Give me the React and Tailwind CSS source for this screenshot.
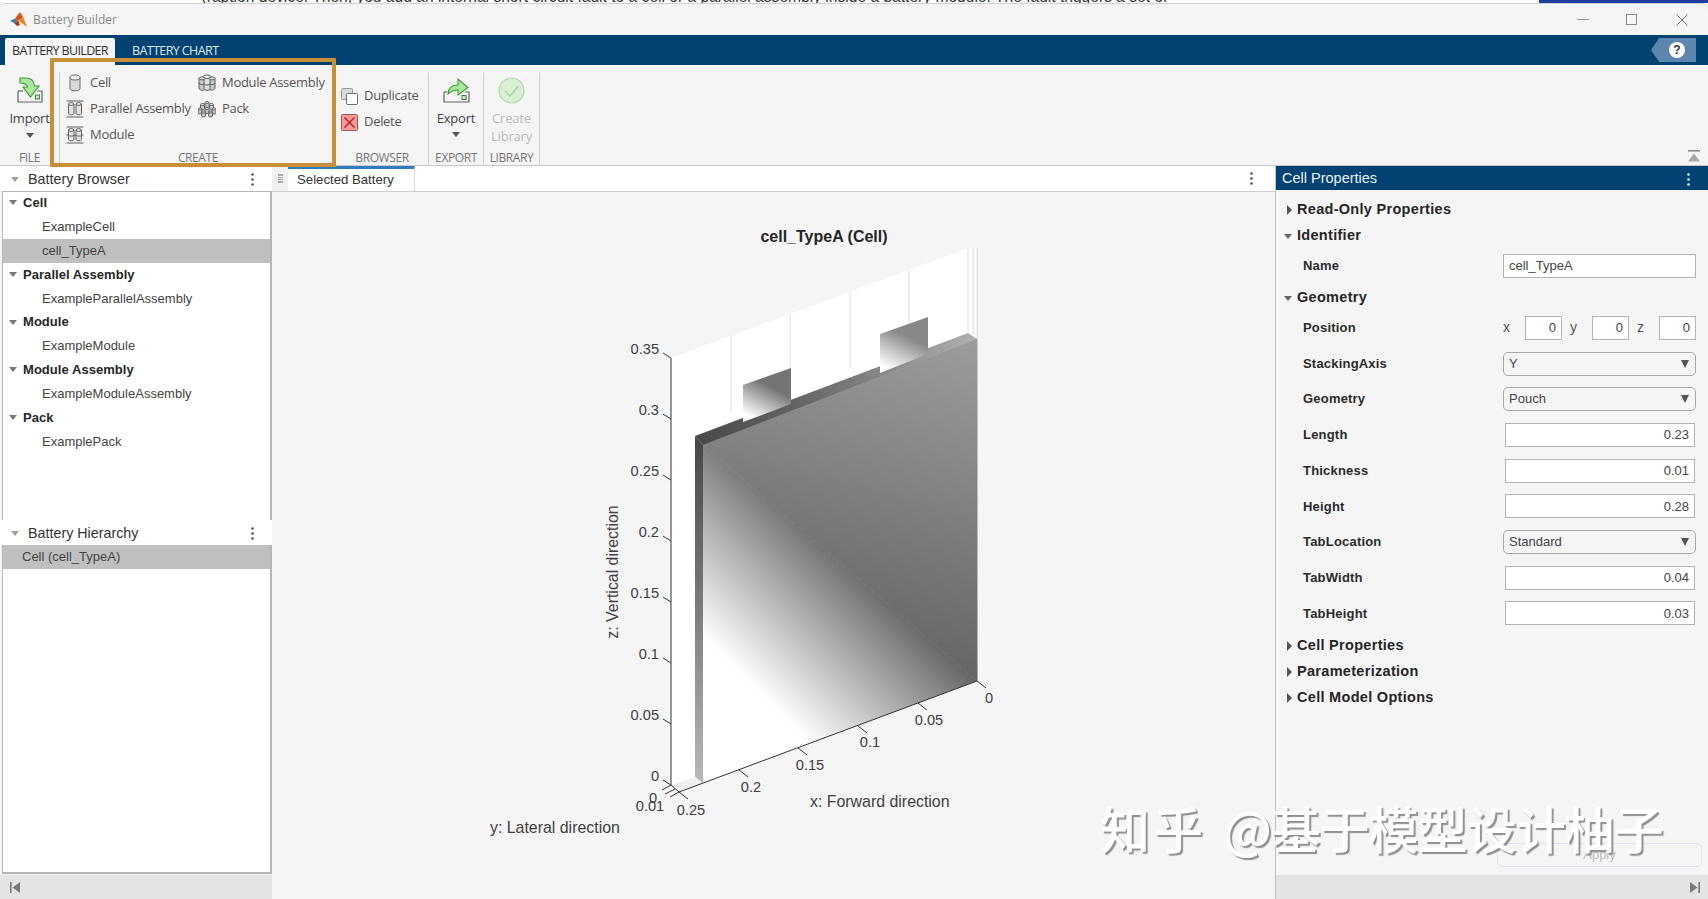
import React from 'react';

const treeGroups = [
  { name: 'Cell', items: ['ExampleCell', 'cell_TypeA'] },
  { name: 'Parallel Assembly', items: ['ExampleParallelAssembly'] },
  { name: 'Module', items: ['ExampleModule'] },
  { name: 'Module Assembly', items: ['ExampleModuleAssembly'] },
  { name: 'Pack', items: ['ExamplePack'] },
];

const zLabels = [['0.35', 349], ['0.3', 410], ['0.25', 471], ['0.2', 532], ['0.15', 593], ['0.1', 654], ['0.05', 715], ['0', 776]];
const xTicks = [
  ['0', 977, 681, 989, 698],
  ['0.05', 918, 703, 929, 720],
  ['0.1', 858, 726, 870, 742],
  ['0.15', 798, 748, 810, 765],
  ['0.2', 739, 770, 751, 787],
  ['0.25', 679, 792, 691, 810],
];
const wallLines = [[731, 335, 412], [790, 314, 391], [850, 292, 368], [909, 270, 346], [968, 248, 333], [973, 248, 335]];

function Logo() {
  return (
    <svg width="18" height="16" viewBox="0 0 18 16">
      <polygon points="0,9 5,6.5 8,8.5 4,11" fill="#3f7fb5" />
      <polygon points="5,6.5 10,0 13,6 8,8.5" fill="#d9531e" />
      <polygon points="10,0 12,2 17,15 13,12 8,8.5 13,6" fill="#e8861f" />
      <polygon points="4,11 8,8.5 10,13 7,14" fill="#9c3d17" />
    </svg>
  );
}

function CellIcon() {
  return (
    <svg width="14" height="18" viewBox="0 0 14 18" fill="none">
      <path d="M2 3.5v11c0 3 10 3 10 0v-11" fill="#d9d9d9" stroke="#6b6b6b" />
      <ellipse cx="7" cy="3.5" rx="5" ry="2.5" fill="#eeeeee" stroke="#6b6b6b" />
    </svg>
  );
}

function ParallelIcon({ stacked }) {
  return (
    <svg width="18" height="18" viewBox="0 0 18 18" fill="none" stroke="#5f5f5f" strokeWidth="1">
      <path d="M0.5 1h17M0.5 17h17" />
      <path d="M2.5 4v9.5c0 1.8 5.5 1.8 5.5 0V4M10 4v9.5c0 1.8 5.5 1.8 5.5 0V4" fill="#e2e2e2" />
      <ellipse cx="5.2" cy="4" rx="2.7" ry="1.4" fill="#f1f1f1" />
      <ellipse cx="12.7" cy="4" rx="2.7" ry="1.4" fill="#f1f1f1" />
      {stacked && <path d="M2.5 9c0 1.5 5.5 1.5 5.5 0M10 9c0 1.5 5.5 1.5 5.5 0M0.5 9h2M8 9h2M15.5 9h2" />}
    </svg>
  );
}

function ModuleAssemblyIcon() {
  return (
    <svg width="18" height="18" viewBox="0 0 18 18" fill="none" stroke="#5f5f5f" strokeWidth="1">
      <path d="M1 4v10c0 3 6 3 6 1V4" fill="#c9c9c9" />
      <path d="M11 3v12c0 2 6 1.5 6-1V4" fill="#c9c9c9" />
      <path d="M6 2.5v12c0 2.5 6 2.5 6 0v-12" fill="#e0e0e0" />
      <ellipse cx="9" cy="2.8" rx="4" ry="1.8" fill="#eeeeee" />
      <ellipse cx="4" cy="4.4" rx="3" ry="1.5" fill="#dddddd" />
      <ellipse cx="14" cy="4.4" rx="3" ry="1.5" fill="#dddddd" />
      <path d="M1 9c0 1.5 4 2 5 1.5M12 10.5c1.5.3 5 0 5-1.5M6 9.5c0 2 6 2 6 0" />
    </svg>
  );
}

function PackIcon() {
  const cyl = [[9, 1.5], [4.5, 3.5], [13.5, 3.5], [2, 8], [9, 7.5], [16, 8], [5.5, 11], [12.5, 11]];
  return (
    <svg width="18" height="18" viewBox="0 0 18 18" fill="none" stroke="#5a5a5a" strokeWidth="0.9">
      {cyl.map(([x, y]) => (
        <g key={`${x}-${y}`}>
          <path d={`M${x - 2} ${y + 1}v4c0 1.4 4 1.4 4 0v-4`} fill="#c4c4c4" />
          <ellipse cx={x} cy={y + 1} rx="2" ry="1" fill="#e6e6e6" />
        </g>
      ))}
    </svg>
  );
}

function DuplicateIcon() {
  return (
    <svg width="17" height="17" viewBox="0 0 17 17">
      <rect x="0.5" y="0.5" width="11" height="11" rx="1" fill="#d9d9d9" stroke="#9a9a9a" />
      <rect x="5.5" y="5.5" width="11" height="11" rx="1" fill="#ffffff" stroke="#6e6e6e" />
    </svg>
  );
}

function DeleteIcon() {
  return (
    <svg width="17" height="17" viewBox="0 0 17 17" fill="none">
      <rect x="0.5" y="0.5" width="16" height="16" rx="1" fill="#f59a9a" stroke="#9a5a5a" />
      <path d="M3.5 3.5l10 10M13.5 3.5l-10 10" stroke="#b51c1c" strokeWidth="1.3" />
    </svg>
  );
}

function ImportIcon() {
  return (
    <svg width="26" height="27" viewBox="0 0 26 27" fill="none">
      <path d="M1 14v11h24V14h-5" stroke="#666" strokeWidth="1.2" fill="#f5f5f5" />
      <path d="M1 14h5" stroke="#666" strokeWidth="1.2" />
      <rect x="18.5" y="18" width="4" height="4" fill="#c6ecc0" stroke="#3f7f3f" />
      <path d="M3 1h6c5 0 8 3 8.5 8H22l-8.5 11L6 10h4.5C10 7.5 8 6 3 6z" fill="#a8e89a" stroke="#3c9a3c" strokeWidth="1.1" />
    </svg>
  );
}

function ExportIcon() {
  return (
    <svg width="27" height="25" viewBox="0 0 27 25" fill="none">
      <path d="M1 14v10h25V14h-4" stroke="#666" strokeWidth="1.2" fill="#f5f5f5" />
      <path d="M1 14h3" stroke="#666" strokeWidth="1.2" />
      <rect x="19" y="17.5" width="4" height="4" fill="#c6ecc0" stroke="#3f7f3f" />
      <path d="M5 16c0-6 4-9 10-9V1l10 8.5L15 17v-5c-5 0-7 1-10 4z" fill="#a8e89a" stroke="#3c9a3c" strokeWidth="1.1" />
    </svg>
  );
}

function CheckCircleIcon() {
  return (
    <svg width="27" height="27" viewBox="0 0 27 27" fill="none">
      <circle cx="13.5" cy="13.5" r="12.5" fill="#d8efd4" stroke="#b0dcaa" strokeWidth="1.2" />
      <path d="M7 14l5 5 8.5-10" stroke="#9fcf98" strokeWidth="1.2" />
    </svg>
  );
}

function Dots({ className = 'fill-[#555]' }) {
  return (
    <svg width="3" height="13" viewBox="0 0 3 13" className={className}>
      <circle cx="1.5" cy="1.5" r="1.3" />
      <circle cx="1.5" cy="6.5" r="1.3" />
      <circle cx="1.5" cy="11.5" r="1.3" />
    </svg>
  );
}

function TriDown({ className = 'border-t-[#8a8a8a]' }) {
  return <span className={`block w-0 h-0 border-x-[4.5px] border-x-transparent border-t-[5px] ${className}`} />;
}

function TriRight() {
  return <span className="block w-0 h-0 border-y-[5px] border-y-transparent border-l-[5px] border-l-[#555]" />;
}

function Section({ className, label, children }) {
  return (
    <div className={`flex flex-col mt-2 border-r border-[#cfcfcf] ${className}`}>
      <div className="flex-1 min-h-0">{children}</div>
      <div className="h-3.5 leading-[14px] text-center text-[12px] text-[#777] tracking-[-0.4px]">{label}</div>
    </div>
  );
}

function RibbonButton({ icon, children }) {
  return (
    <div className="flex flex-col items-center pt-1">
      <div className="h-[26px] flex items-center">{icon}</div>
      <div className="mt-[6px] leading-[18px] text-center text-[13px] text-[#444] tracking-[-0.2px]">{children}</div>
    </div>
  );
}

function SmallButton({ icon, iconClass = 'w-[18px]', label }) {
  return (
    <div className="flex items-center h-[26px]">
      <span className={`flex justify-center ${iconClass}`}>{icon}</span>
      <span className="ml-[6px] text-[13px] text-[#555] tracking-[-0.3px]">{label}</span>
    </div>
  );
}

function PanelHeader({ title }) {
  return (
    <div className="h-[25px] pt-0.5 bg-white flex items-center">
      <span className="ml-[11px]"><TriDown className="border-t-[#a0a0a0]" /></span>
      <span className="ml-[9px] text-[14.3px] text-[#333]">{title}</span>
      <span className="ml-auto mr-[18px] flex"><Dots /></span>
    </div>
  );
}

function SectionTitle({ open, children }) {
  return (
    <div className="h-[26px] pt-0.5 flex items-center">
      <span className="w-[21px] flex justify-end pr-[5px]">{open ? <TriDown className="border-t-[#666]" /> : <TriRight />}</span>
      <span className="text-[14.5px] font-bold text-[#262626] tracking-[0.3px]">{children}</span>
    </div>
  );
}

function PropRow({ label, children, tall }) {
  return (
    <div className={`flex items-center pl-[27px] pr-3 ${tall ? 'h-9' : 'h-[35.7px]'}`}>
      <span className="text-[13px] font-bold text-[#2b2b2b] tracking-[0.2px]">{label}</span>
      <div className="ml-auto flex items-center">{children}</div>
    </div>
  );
}

function NumberField({ value }) {
  return (
    <div className="w-[190px] h-6 mr-px bg-white border border-[#b4b4b4] flex items-center justify-end pr-[5px] text-[13px] text-[#444]">{value}</div>
  );
}

function SmallField({ axis, value }) {
  return (
    <>
      <span className="w-[30px] pr-[7px] text-center text-[14px] text-[#555]">{axis}</span>
      <div className="w-[37px] h-6 bg-white border border-[#b4b4b4] flex items-center justify-end pr-[5px] text-[13px] text-[#444]">{value}</div>
    </>
  );
}

function DropDown({ value }) {
  return (
    <div className="w-[193px] h-6 rounded-[5px] bg-[#f5f5f5] border border-[#a8a8a8] flex items-center px-[5px] text-[13px] text-[#444]">
      {value}
      <span className="ml-auto mr-[1px]"><span className="block w-0 h-0 border-x-[4.5px] border-x-transparent border-t-[8px] border-t-[#555]" /></span>
    </div>
  );
}

function BatteryChart() {
  return (
    <svg viewBox="272 192 1003 707" className="w-full h-full block" fontFamily="'Liberation Sans', Arial, sans-serif">
      <defs>
        {/* the face is two shaded triangles split along a diagonal */}
        <linearGradient id="faceLow" gradientUnits="userSpaceOnUse" x1="703" y1="637" x2="818" y2="522">
          <stop offset="0" stopColor="#ffffff" />
          <stop offset="1" stopColor="#666666" />
        </linearGradient>
        <linearGradient id="faceHigh" gradientUnits="userSpaceOnUse" x1="977" y1="681" x2="1059" y2="358">
          <stop offset="0" stopColor="#666666" />
          <stop offset="1" stopColor="#9c9c9c" />
        </linearGradient>
        <linearGradient id="side" x1="0" y1="0" x2="0" y2="1">
          <stop offset="0" stopColor="#464646" />
          <stop offset="0.5" stopColor="#7c7c7c" />
          <stop offset="1" stopColor="#b8b8b8" />
        </linearGradient>
        <linearGradient id="topEdge" gradientUnits="userSpaceOnUse" x1="695" y1="440" x2="977" y2="336">
          <stop offset="0" stopColor="#484848" />
          <stop offset="0.4" stopColor="#686868" />
          <stop offset="1" stopColor="#b0b0b0" />
        </linearGradient>
        <linearGradient id="tabA" gradientUnits="userSpaceOnUse" x1="745" y1="414" x2="762" y2="382">
          <stop offset="0" stopColor="#ffffff" />
          <stop offset="1" stopColor="#747474" />
        </linearGradient>
        <linearGradient id="tabB" gradientUnits="userSpaceOnUse" x1="882" y1="366" x2="899" y2="332">
          <stop offset="0" stopColor="#ffffff" />
          <stop offset="1" stopColor="#888888" />
        </linearGradient>
      </defs>

      {/* back wall */}
      <polygon points="671,358 968,248 977,248 977,681 671,788" fill="#ffffff" />
      {wallLines.map(([x, y1, y2]) => (
        <line key={x} x1={x} y1={y1} x2={x} y2={y2} stroke="#dedede" />
      ))}
      <line x1="977" y1="248" x2="977" y2="339" stroke="#d8d8d8" />

      {/* cell body, upper triangle overlaps the lower one so no seam shows */}
      <polygon points="703,445 977,681 703,783" fill="url(#faceLow)" />
      <polygon points="703,445 977,339 977,681" fill="url(#faceHigh)" stroke="url(#faceHigh)" strokeWidth="1" />
      <polygon points="695,436 968,333 977,339 703,445" fill="url(#topEdge)" />
      <polygon points="695,436 703,445 703,783 695,777" fill="url(#side)" />
      <polygon points="671,785 695,777 703,783 679,792" fill="#f0f0f0" />

      {/* tabs, their gradient runs over the edge below them */}
      <polygon points="743,385 791,368 791,404 743,422" fill="url(#tabA)" />
      <polygon points="880,334 928,317 928,354 880,373" fill="url(#tabB)" />

      {/* axes */}
      <g stroke="#333" strokeWidth="1" fill="none">
        <line x1="671" y1="358" x2="671" y2="785" />
        <line x1="671" y1="785" x2="679" y2="792" />
        <line x1="679" y1="792" x2="977" y2="681" />
        {zLabels.map(([l, y]) => (
          <line key={l} x1="663" y1={y + 4} x2="671" y2={y + 9} />
        ))}
        {xTicks.map(([l, x, y]) => (
          <line key={l} x1={x} y1={y} x2={x + 9} y2={y + 7} />
        ))}
        <line x1="662" y1="790" x2="671" y2="785" />
        <line x1="665" y1="794" x2="675" y2="789" />
        <line x1="670" y1="797" x2="679" y2="792" />
      </g>

      <g fill="#404040" fontSize="14.6">
        {zLabels.map(([l, y]) => (
          <text key={l} x="659" y={y + 5} textAnchor="end">{l}</text>
        ))}
        {xTicks.map(([l, , , tx, ty]) => (
          <text key={l} x={tx} y={ty + 5} textAnchor="middle">{l}</text>
        ))}
        <text x="653" y="803" textAnchor="middle">0</text>
        <text x="650" y="811" textAnchor="middle">0.01</text>
        <text x="810" y="807" fontSize="15.9">x: Forward direction</text>
        <text x="490" y="833" fontSize="15.9">y: Lateral direction</text>
        <text x="618" y="572" fontSize="15.9" textAnchor="middle" transform="rotate(-90 618 572)">z: Vertical direction</text>
      </g>
      <text x="824" y="242" fontSize="16" fontWeight="700" fill="#262626" textAnchor="middle">cell_TypeA (Cell)</text>
    </svg>
  );
}

export default function App() {
  return (
    <div className="relative w-[1708px] h-[899px] overflow-hidden bg-white flex flex-col font-['Liberation_Sans',Arial,sans-serif]">
      {/* what sits behind the window */}
      <div className="h-[3px] flex overflow-hidden bg-white">
        <div className="flex-1 pl-[196px] overflow-hidden whitespace-nowrap text-[15.6px] leading-[18px] text-[#333] -mt-[12px]">
          ▪(raption device. Then, you add an internal short circuit fault to a cell or a parallel assembly inside a battery module. The fault triggers a set of
        </div>
        <div className="w-[169px] bg-[#1c3f9e]" />
      </div>

      {/* title bar */}
      <div className="h-8 bg-[#f5f5f5] rounded-t-[6px] flex items-center border-t border-[#cfcfcf] font-['Open_Sans',sans-serif]">
        <span className="ml-[10px] flex"><Logo /></span>
        <span className="ml-[5px] text-[12px] text-[#888]">Battery Builder</span>
        <div className="ml-auto flex items-center">
          <span className="block w-3 h-px bg-[#9a9a9a]" />
          <span className="ml-[37px] block w-[11px] h-[11px] border border-[#8a8a8a]" />
          <svg className="ml-[39px] mr-5" width="12" height="12" viewBox="0 0 12 12" stroke="#777" fill="none">
            <path d="M0.5 0.5l11 11M11.5 0.5l-11 11" />
          </svg>
        </div>
      </div>

      {/* tab strip */}
      <div className="h-[30px] bg-[#004272] flex items-end pl-[5px] font-['Open_Sans',sans-serif]">
        <div className="w-[110px] h-[27px] bg-[#f5f5f5] rounded-t-[2px] flex items-center justify-center text-[12.5px] tracking-[-0.65px] text-[#333]">BATTERY BUILDER</div>
        <div className="ml-[17px] h-[27px] flex items-center text-[12.5px] tracking-[-0.6px] text-[#dfe8f0]">BATTERY CHART</div>
        <div className="ml-auto mr-3 mb-[3px] h-6 w-[45px] bg-[#5b87ae] [clip-path:polygon(18%_0,100%_0,100%_100%,18%_100%,0_50%)] flex items-center justify-end pr-[11px]">
          <span className="w-4 h-4 rounded-full bg-white text-[#333] text-[12px] font-bold flex items-center justify-center font-['Liberation_Sans']">?</span>
        </div>
      </div>

      {/* ribbon */}
      <div className="h-[101px] bg-[#f5f5f5] border-b border-[#c8c8c8] flex font-['Open_Sans',sans-serif]">
        <Section className="w-[60px]" label="FILE">
          <RibbonButton icon={<ImportIcon />}>
            Import
            <span className="flex justify-center mt-[6px]"><TriDown className="border-t-[#555]" /></span>
          </RibbonButton>
        </Section>

        <Section className="w-[276px] border-r-0" label="CREATE">
          <div className="-mt-[3px] pl-[6px] grid grid-cols-[132px_1fr]">
            <SmallButton icon={<CellIcon />} label="Cell" />
            <SmallButton icon={<ModuleAssemblyIcon />} label="Module Assembly" />
            <SmallButton icon={<ParallelIcon />} label="Parallel Assembly" />
            <SmallButton icon={<PackIcon />} label="Pack" />
            <SmallButton icon={<ParallelIcon stacked />} label="Module" />
          </div>
        </Section>

        <Section className="w-[93px]" label="BROWSER">
          <div className="pt-[10px] pl-[5px]">
            <SmallButton icon={<DuplicateIcon />} iconClass="w-[17px]" label="Duplicate" />
            <SmallButton icon={<DeleteIcon />} iconClass="w-[17px]" label="Delete" />
          </div>
        </Section>

        <Section className="w-[55px]" label="EXPORT">
          <RibbonButton icon={<ExportIcon />}>
            Export
            <span className="flex justify-center mt-[5px]"><TriDown className="border-t-[#555]" /></span>
          </RibbonButton>
        </Section>

        <Section className="w-[56px]" label="LIBRARY">
          <RibbonButton icon={<CheckCircleIcon />}>
            <span className="text-[#bcbcbc]">Create<br />Library</span>
          </RibbonButton>
        </Section>

        <div className="flex-1 flex justify-end items-end pr-[8px] pb-[3px]">
          <svg width="12" height="12" viewBox="0 0 12 12">
            <rect x="0" y="0" width="12" height="1.6" fill="#8a8a8a" />
            <polygon points="6,3.5 12,11.5 0,11.5" fill="#a8a8a8" />
          </svg>
        </div>
      </div>

      {/* panels */}
      <div className="flex-1 min-h-0 flex bg-[#f5f5f5]">
        {/* left column */}
        <div className="w-[272px] flex flex-col">
          <PanelHeader title="Battery Browser" />
          <div className="h-[329px] ml-0.5 bg-white border-l border-r-2 border-t border-[#b5b5b5] text-[13px]">
            <div className="-mt-px">
              {treeGroups.map((group) => (
                <div key={group.name}>
                  <div className="h-[23.85px] flex items-center pl-[6px] font-bold text-[#262626] tracking-[0.05px]">
                    <TriDown className="border-t-[#777]" />
                    <span className="ml-[6px]">{group.name}</span>
                  </div>
                  {group.items.map((item) => (
                    <div key={item} className={`h-[23.85px] flex items-center pl-[39px] text-[#444] ${item === 'cell_TypeA' ? 'bg-[#bfbfbf]' : ''}`}>{item}</div>
                  ))}
                </div>
              ))}
            </div>
          </div>
          <PanelHeader title="Battery Hierarchy" />
          <div className="h-[329px] ml-0.5 bg-white border-l border-r-2 border-b-2 border-[#b5b5b5] text-[13px]">
            <div className="h-[24px] bg-[#bfbfbf] flex items-center pl-[19px] text-[#444]">Cell (cell_TypeA)</div>
          </div>
          <div className="mt-auto h-6 bg-[#e4e4e4] flex items-center pl-[10px]">
            <svg width="10" height="11" viewBox="0 0 10 11" fill="#7a7a7a">
              <rect x="0" y="0" width="1.6" height="11" />
              <polygon points="10,0 10,11 2.5,5.5" />
            </svg>
          </div>
        </div>

        {/* center */}
        <div className="flex-1 min-w-0 flex flex-col">
          <div className="h-[26px] bg-white border-b border-[#d0d0d0] flex">
            <div className="w-4 bg-[#f0f0f0] flex items-center justify-center">
              <span className="block w-[5px] h-[9px] border-y border-[#aaa] bg-[repeating-linear-gradient(#aaa_0,#aaa_1px,transparent_1px,transparent_2px)]" />
            </div>
            <div className="w-[127px] border-t-[3px] border-[#2f7dc0] border-r border-r-[#d8d8d8] bg-white flex items-center pl-[9px] text-[13.2px] text-[#333]">Selected Battery</div>
            <span className="ml-auto mr-[22px] flex items-center"><Dots /></span>
          </div>
          <div className="flex-1 min-h-0">
            <BatteryChart />
          </div>
        </div>

        {/* right column */}
        <div className="w-[433px] flex flex-col border-l border-[#c0c0c0]">
          <div className="h-6 pt-0.5 bg-[#004272] flex items-center pl-[6px] pr-[18px] text-[14.5px] text-[#eef3f7]">
            Cell Properties
            <span className="ml-auto flex"><Dots className="fill-[#e8eef3]" /></span>
          </div>
          <div className="flex-1 min-h-0 pt-[6px]">
            <SectionTitle>Read-Only Properties</SectionTitle>
            <SectionTitle open>Identifier</SectionTitle>
            <PropRow label="Name" tall>
              <div className="w-[193px] h-6 bg-white border border-[#b4b4b4] flex items-center pl-[5px] text-[13px] text-[#444]">cell_TypeA</div>
            </PropRow>
            <SectionTitle open>Geometry</SectionTitle>
            <PropRow label="Position">
              <SmallField axis="x" value="0" />
              <SmallField axis="y" value="0" />
              <SmallField axis="z" value="0" />
            </PropRow>
            <PropRow label="StackingAxis"><DropDown value="Y" /></PropRow>
            <PropRow label="Geometry"><DropDown value="Pouch" /></PropRow>
            <PropRow label="Length"><NumberField value="0.23" /></PropRow>
            <PropRow label="Thickness"><NumberField value="0.01" /></PropRow>
            <PropRow label="Height"><NumberField value="0.28" /></PropRow>
            <PropRow label="TabLocation"><DropDown value="Standard" /></PropRow>
            <PropRow label="TabWidth"><NumberField value="0.04" /></PropRow>
            <PropRow label="TabHeight"><NumberField value="0.03" /></PropRow>
            <div className="h-px" />
            <SectionTitle>Cell Properties</SectionTitle>
            <SectionTitle>Parameterization</SectionTitle>
            <SectionTitle>Cell Model Options</SectionTitle>
          </div>
          <div className="flex justify-end pr-[6px] pb-2">
            <div className="w-[205px] h-6 rounded-[5px] border border-[#dfe5ee] flex items-center justify-center text-[13px] text-[#bdbdbd]">Apply</div>
          </div>
          <div className="h-6 bg-[#e4e4e4] flex items-center justify-end pr-[8px]">
            <svg width="10" height="11" viewBox="0 0 10 11" fill="#7a7a7a">
              <polygon points="0,0 0,11 7.5,5.5" />
              <rect x="8.4" y="0" width="1.6" height="11" />
            </svg>
          </div>
        </div>
      </div>

      {/* annotation frame over the ribbon */}
      <div className="absolute left-[50px] top-[58px] w-[286px] h-[109px] border-4 border-[#c98f37] rounded-[1px] pointer-events-none" />

      {/* watermark */}
      <div className="absolute left-[1100px] top-[795px] whitespace-nowrap text-[50px] leading-[64px] tracking-[-1px] text-white font-['Noto_Sans_CJK_SC',sans-serif] font-medium [text-shadow:2px_2px_1px_rgba(110,110,110,0.75)] pointer-events-none">
        <span className="tracking-[3px]">知乎</span> <span className="ml-[7px]">@基于模型设计柚子</span>
      </div>
    </div>
  );
}
